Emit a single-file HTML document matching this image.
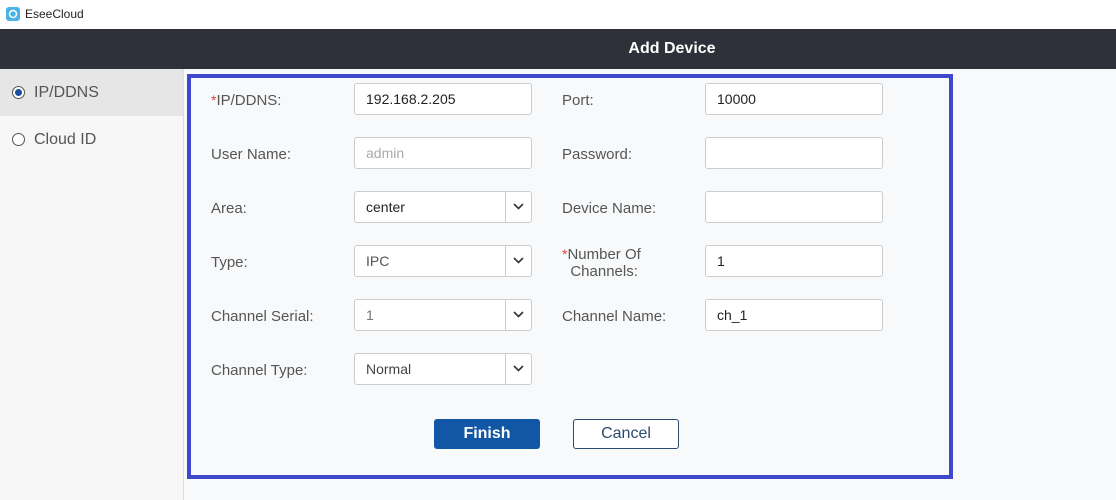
<!DOCTYPE html>
<html><head><style>
*{margin:0;padding:0;box-sizing:border-box}
body{width:1116px;height:500px;overflow:hidden;background:#f8f9fa;font-family:"Liberation Sans",sans-serif;position:relative;color:#555}
.tb{position:absolute;left:0;top:0;width:1116px;height:29px;background:#fff;font-size:12px;color:#222}
.hd{position:absolute;left:0;top:29px;width:1116px;height:40px;background:#2e3139;color:#fff;font-size:16px;font-weight:bold;text-align:center;line-height:40px;padding-left:228px}
.sb{position:absolute;left:0;top:69px;width:184px;height:431px;background:#f7f7f7;border-right:1px solid #ddd}
.it{height:47px;line-height:47px;font-size:16px;color:#555;padding-left:34px;position:relative}
.it .r{position:absolute;left:12px;top:17px;width:13px;height:13px;border:1px solid #555;border-radius:50%;background:#fff}
.it .r.on::after{content:"";position:absolute;left:2px;top:2px;width:7px;height:7px;border-radius:50%;background:#1a4d9c}
.box{position:absolute;left:187px;top:74px;width:766px;height:405px;border:4px solid #3f48cc}
.l{position:absolute;font-size:15px;color:#555;margin-top:2px}
.s{color:#e04040;font-size:14px}
.in{position:absolute;width:178px;height:32px;background:#fff;border:1px solid #ccc;border-radius:3px;font-size:14px;color:#222;padding-left:11px;line-height:30px}
.in .a{position:absolute;right:0;top:0;width:26px;height:30px;border-left:1px solid #ccc}
.in .a svg{position:absolute;left:7px;top:11px}
.btn{position:absolute;top:419px;width:106px;height:30px;border-radius:3px;font-size:16px;text-align:center;line-height:28px}
</style></head><body>
<div class="tb"><svg style="position:absolute;left:6px;top:7px" width="14" height="14"><rect width="14" height="14" rx="3" fill="#4ab4e6"/><circle cx="7" cy="7" r="3.5" fill="none" stroke="#fff" stroke-width="1.5"/></svg><span style="position:absolute;left:25px;top:7px">EseeCloud</span></div>
<div class="hd">Add Device</div>
<div class="sb">
<div class="it" style="background:#e6e6e6"><span class="r on"></span>IP/DDNS</div>
<div class="it"><span class="r"></span>Cloud ID</div>
</div>
<div class="box"></div>
<div class="l" style="left:211px;top:90px"><span class="s">*</span>IP/DDNS:</div>
<div class="l" style="left:211px;top:144px">User Name:</div>
<div class="l" style="left:211px;top:198px">Area:</div>
<div class="l" style="left:211px;top:252px">Type:</div>
<div class="l" style="left:211px;top:306px">Channel Serial:</div>
<div class="l" style="left:211px;top:360px">Channel Type:</div>
<div class="l" style="left:562px;top:90px">Port:</div>
<div class="l" style="left:562px;top:144px">Password:</div>
<div class="l" style="left:562px;top:198px">Device Name:</div>
<div class="l" style="left:562px;top:244px;line-height:17px"><span class="s">*</span>Number Of<br>&nbsp;&nbsp;Channels:</div>
<div class="l" style="left:562px;top:306px">Channel Name:</div>
<div class="in" style="left:354px;top:83px">192.168.2.205</div>
<div class="in" style="left:354px;top:137px;color:#aaa">admin</div>
<div class="in" style="left:354px;top:191px">center<span class="a"><svg width="11" height="7"><path d="M1 1l4.5 4.5L10 1" fill="none" stroke="#333" stroke-width="1.6"/></svg></span></div>
<div class="in" style="left:354px;top:245px;color:#555">IPC<span class="a"><svg width="11" height="7"><path d="M1 1l4.5 4.5L10 1" fill="none" stroke="#333" stroke-width="1.6"/></svg></span></div>
<div class="in" style="left:354px;top:299px;color:#777">1<span class="a"><svg width="11" height="7"><path d="M1 1l4.5 4.5L10 1" fill="none" stroke="#333" stroke-width="1.6"/></svg></span></div>
<div class="in" style="left:354px;top:353px;color:#444">Normal<span class="a"><svg width="11" height="7"><path d="M1 1l4.5 4.5L10 1" fill="none" stroke="#333" stroke-width="1.6"/></svg></span></div>
<div class="in" style="left:705px;top:83px">10000</div>
<div class="in" style="left:705px;top:137px"></div>
<div class="in" style="left:705px;top:191px"></div>
<div class="in" style="left:705px;top:245px">1</div>
<div class="in" style="left:705px;top:299px">ch_1</div>
<div class="btn" style="left:434px;background:#1257a6;color:#fff;border:1px solid #1257a6;font-weight:bold">Finish</div>
<div class="btn" style="left:573px;background:#fff;color:#2c4a6e;border:1px solid #2c4a6e">Cancel</div>
</body></html>
